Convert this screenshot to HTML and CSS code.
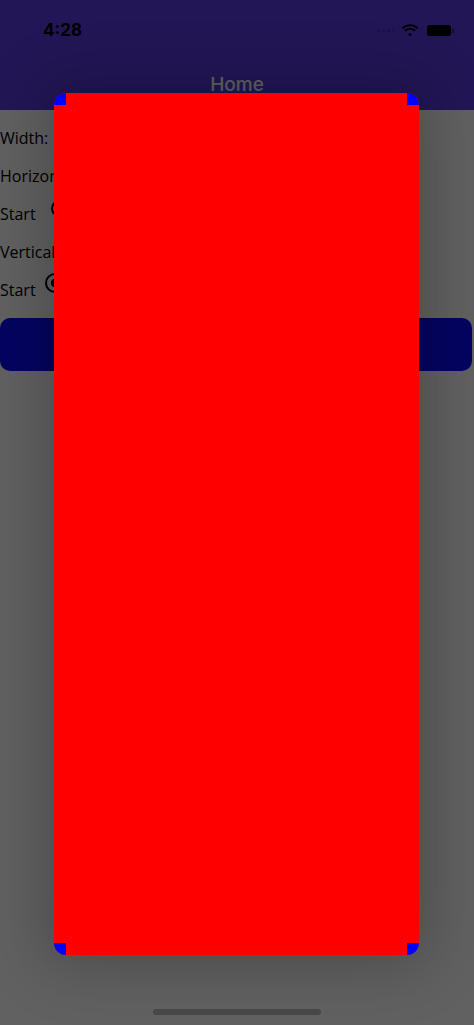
FILE: index.html
```html
<!DOCTYPE html>
<html>
<head>
<meta charset="utf-8">
<link rel="stylesheet" href="styles.css">
</head>
<body>
<div class="screen">
  <header class="nav">
    <div class="status">
      <span class="time">4:28</span>
      <div class="status-icons">
        <span class="cell">
          <i></i><i></i><i></i><i></i>
        </span>
        <svg class="wifi" width="18" height="13" viewBox="0 0 18 13">
          <path d="M9 2.2c2.7 0 5.1 1 6.9 2.7l1.3-1.4C15 1.4 12.1.2 9 .2S3 1.4.8 3.5l1.3 1.4C3.9 3.2 6.3 2.2 9 2.2z" fill="#000"/>
          <path d="M9 5.8c1.7 0 3.2.6 4.4 1.7l1.3-1.4C13.2 4.7 11.2 3.9 9 3.9S4.8 4.7 3.3 6.1l1.3 1.4C5.8 6.4 7.3 5.8 9 5.8z" fill="#000"/>
          <path d="M9 9.3c.8 0 1.5.3 2 .8L9 12.4 7 10.1c.5-.5 1.2-.8 2-.8z" fill="#000"/>
        </svg>
        <span class="battery"></span>
      </div>
    </div>
    <div class="title">Home</div>
  </header>
  <main class="content">
    <div class="row">Width:</div>
    <div class="row">Horizontal Options:</div>
    <div class="row">Start <span class="radio"></span> Center <span class="radio"></span> End <span class="radio"></span></div>
    <div class="row">Vertical Options:</div>
    <div class="row">Start <span class="radio on"></span> Center <span class="radio"></span> End <span class="radio"></span></div>
    <button class="btn">Show Popup</button>
  </main>
</div>
<div class="overlay">
  <div class="popup">
    <span class="corner tl"></span>
    <span class="corner tr"></span>
    <span class="corner bl"></span>
    <span class="corner br"></span>
  </div>
  <div class="home-bar"></div>
</div>
</body>
</html>
```
FILE: styles.css
```css
html, body {
  margin: 0;
  padding: 0;
}
body {
  width: 474px;
  height: 1025px;
  overflow: hidden;
  background: #fff;
  font-family: "Open Sans", "Liberation Sans", sans-serif;
  position: relative;
}
.screen {
  height: 1025px;
}
.nav {
  background: #5a3ce2;
  height: 110px;
  display: flex;
  flex-direction: column;
}
.status {
  height: 60px;
  display: flex;
  justify-content: space-between;
  align-items: center;
  padding: 0 23px 0 43px;
}
.time {
  font-family: "Inter", "Liberation Sans", sans-serif;
  font-weight: 700;
  font-size: 17px;
  color: #000;
}
.status-icons {
  display: flex;
  align-items: center;
  gap: 6px;
}
.cell {
  display: flex;
  align-items: flex-end;
  gap: 2px;
  opacity: 0.2;
}
.cell i {
  width: 3px;
  height: 3px;
  background: #000;
  border-radius: 1px;
}
.battery {
  width: 24px;
  height: 11px;
  border-radius: 3px;
  background: #000;
  position: relative;
  margin-left: 2px;
}
.battery::after {
  content: "";
  position: absolute;
  right: -3px;
  top: 4px;
  width: 2px;
  height: 4px;
  background: #000;
  opacity: 0.4;
  border-radius: 0 1px 1px 0;
}
.title {
  text-align: center;
  color: #ffffff;
  font-family: "Inter", "Liberation Sans", sans-serif;
  font-weight: 500;
  font-size: 19px;
  padding-top: 13px;
}
.content {
  padding-top: 9px;
  color: #000;
  font-size: 16px;
}
.row {
  height: 38px;
  display: flex;
  align-items: center;
  white-space: nowrap;
}
.radio {
  width: 17px;
  height: 17px;
  border: 2px solid #000;
  border-radius: 50%;
  margin: 0 10px 12px 15px;
  box-sizing: border-box;
  flex: none;
}
.radio.on {
  width: 20px;
  height: 20px;
  margin-left: 9px;
  margin-bottom: 14px;
  border-width: 2px;
  background: radial-gradient(circle, #000 0 4px, #fff 4.5px);
}
.btn {
  display: block;
  width: 472px;
  height: 53px;
  margin-top: 9px;
  border: none;
  border-radius: 10px;
  background: #0d0dff;
  color: #fff;
  font-family: "Open Sans", "Liberation Sans", sans-serif;
  font-size: 16px;
}
.overlay {
  position: absolute;
  inset: 0;
  background: rgba(0, 0, 0, 0.62);
}
.popup {
  position: absolute;
  left: 54px;
  top: 93px;
  width: 365px;
  height: 862px;
  background: #ff0000;
  border-radius: 12px;
  box-shadow: 0 0 60px 12px rgba(0, 0, 0, 0.22);
}
.corner {
  position: absolute;
  width: 12px;
  height: 12px;
  background: #0000ff;
}
.tl { left: 0; top: 0; border-top-left-radius: 12px; }
.tr { right: 0; top: 0; border-top-right-radius: 12px; }
.bl { left: 0; bottom: 0; border-bottom-left-radius: 12px; }
.br { right: 0; bottom: 0; border-bottom-right-radius: 12px; }
.home-bar {
  position: absolute;
  left: 153px;
  top: 1009px;
  width: 168px;
  height: 6px;
  border-radius: 3px;
  background: #474747;
}
```
